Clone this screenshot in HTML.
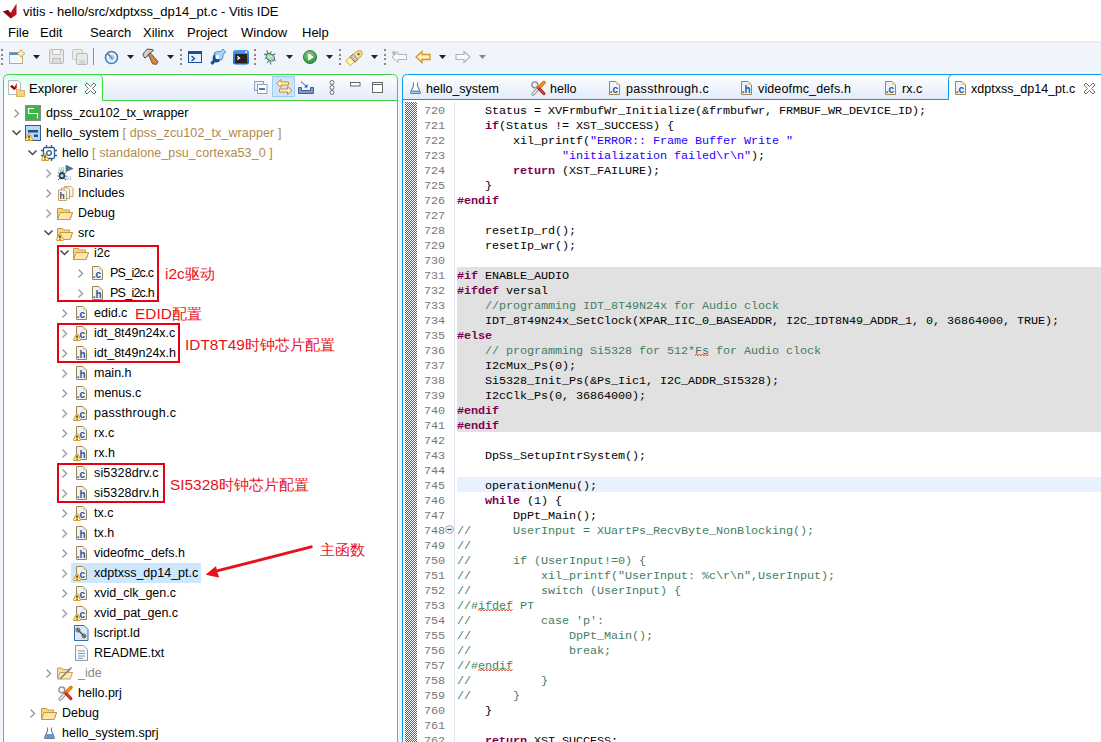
<!DOCTYPE html><html><head><meta charset="utf-8"><title>Vitis IDE</title><style>
*{margin:0;padding:0;box-sizing:border-box}
html,body{width:1101px;height:742px;overflow:hidden;background:#f0f5fc;font-family:"Liberation Sans",sans-serif;color:#000}
.abs{position:absolute}
.t{position:absolute;white-space:pre;line-height:14px}
svg{position:absolute;overflow:visible}
#title{position:absolute;left:0;top:0;width:1101px;height:41px;background:#fff}
#tbsep{position:absolute;left:0;top:41px;width:1101px;height:2px;background:#ececec}
.menu{position:absolute;top:25px;font-size:13px;white-space:pre}
.tree{position:absolute;font-size:12.5px;white-space:pre;line-height:20px;height:20px}
.code{position:absolute;left:457px;font-family:"Liberation Mono",monospace;font-size:11.8px;letter-spacing:-0.08px;white-space:pre;line-height:15px;height:15px}
.ln{position:absolute;left:417px;width:28px;text-align:right;font-family:"Liberation Mono",monospace;font-size:11.8px;letter-spacing:-0.08px;white-space:pre;line-height:15px;color:#787878}
.k{color:#7f0055;font-weight:bold}
.s{color:#2a00ff}
.c{color:#3f7f5f}
.ann{position:absolute;color:#e8101a;font-size:15.4px;white-space:pre;line-height:18px}
.rbox{position:absolute;border:2px solid #e60012}
.tab{position:absolute;top:81px;font-size:12.5px;white-space:pre;line-height:16px}
</style></head><body>
<div id="title"></div>
<svg style="left:2px;top:3px" width="16" height="16" viewBox="0 0 16 16"><path d="M1 8.5 L6 7 L8.5 10 L14.5 0.5 L14.5 11.5 L9 15.5 Z" fill="#c0101a"/><path d="M1 8.5 L6 7 L9 10.5 L9 15.5 Z" fill="#8a0a10"/></svg>
<div class="t" style="left:23px;top:5px;font-size:13px">vitis - hello/src/xdptxss_dp14_pt.c - Vitis IDE</div>
<div class="menu" style="left:8px">File</div>
<div class="menu" style="left:40px">Edit</div>
<div class="menu" style="left:90px">Search</div>
<div class="menu" style="left:143px">Xilinx</div>
<div class="menu" style="left:187px">Project</div>
<div class="menu" style="left:241px">Window</div>
<div class="menu" style="left:302px">Help</div>
<div id="tbsep"></div>
<svg style="left:1px;top:49px" width="2" height="16"><g fill="#8f887a"><rect x="0" y="0" width="2" height="2"/><rect x="0" y="5" width="2" height="2"/><rect x="0" y="9" width="2" height="2"/><rect x="0" y="14" width="2" height="2"/></g></svg>
<svg style="left:9px;top:49px" width="17" height="16"><rect x="0.5" y="3.5" width="13" height="11" fill="#f4f8fd" stroke="#c9a86a"/><rect x="0.5" y="3.5" width="13" height="2.5" fill="#4a90d9"/><path d="M12 0.5l1.5 2.5 2.5 1.5-2.5 1.5-1.5 2.5-1.5-2.5-2.5-1.5 2.5-1.5z" fill="#fff6c8" stroke="#c8a040" stroke-width="0.8"/></svg>
<svg style="left:33px;top:55px" width="8" height="5"><path d="M0 0H7L3.5 4Z" fill="#222"/></svg>
<svg style="left:49px;top:49px" width="16" height="16"><rect x="0.5" y="0.5" width="14" height="14" rx="1.5" fill="#e9e9e9" stroke="#b9b9b9"/><rect x="3.5" y="0.5" width="8" height="5" fill="#f7f7f7" stroke="#c0c0c0"/><rect x="3.5" y="9.5" width="8" height="5" fill="#dcdcdc" stroke="#bdbdbd"/></svg>
<svg style="left:72px;top:49px" width="16" height="16"><rect x="0.5" y="0.5" width="10" height="10" rx="1" fill="#ececec" stroke="#c4c4c4"/><rect x="4.5" y="4.5" width="11" height="11" rx="1.5" fill="#e9e9e9" stroke="#b9b9b9"/><rect x="7" y="11" width="6" height="4" fill="#d6d6d6"/></svg>
<div class="abs" style="left:93px;top:48px;width:1px;height:17px;background:#8c8c8c"></div>
<svg style="left:104px;top:50px" width="15" height="15"><circle cx="7.5" cy="7.5" r="6" fill="#e8f1fb" stroke="#3d7fc4" stroke-width="1.6"/><path d="M3.5 3.5L9 9" stroke="#5b6f85" stroke-width="1.5"/><circle cx="7.5" cy="7.5" r="2" fill="none" stroke="#8fb6e0"/></svg>
<svg style="left:127px;top:55px" width="8" height="5"><path d="M0 0H7L3.5 4Z" fill="#222"/></svg>
<svg style="left:138px;top:46px" width="24" height="22"><path d="M10.4 8.9L12.5 7.1L20 15.5L18.4 18.4L14.5 17.8Z" fill="#c98d48" stroke="#7a4614" stroke-width="0.9"/><path d="M9.2 3.1L14.8 3.6L15.7 4.5L14.2 5.5L11.9 6.8L8.6 11L6.8 11.9L5.3 9.8L5.2 7.4L7.4 5.3Z" fill="#cfcfcf" stroke="#3c3c3c" stroke-width="0.9"/></svg>
<svg style="left:167px;top:55px" width="8" height="5"><path d="M0 0H7L3.5 4Z" fill="#222"/></svg>
<svg style="left:180px;top:49px" width="2" height="16"><g fill="#8f887a"><rect x="0" y="0" width="2" height="2"/><rect x="0" y="5" width="2" height="2"/><rect x="0" y="9" width="2" height="2"/><rect x="0" y="14" width="2" height="2"/></g></svg>
<svg style="left:188px;top:51px" width="14" height="12"><rect x="0.5" y="0.5" width="13" height="11" fill="#e6f1f8" stroke="#1f4b9a"/><rect x="0.5" y="0.5" width="13" height="2.5" fill="#1f4b9a"/><path d="M3.5 5l3 2.5-3 2.5" fill="none" stroke="#1f4b9a" stroke-width="1.4"/></svg>
<svg style="left:206px;top:46px" width="24" height="22"><path d="M8 7Q11 5 14.5 5.5L17 3L19.8 6L17 8.5Q17.5 12 15.5 14Z" fill="#a9d3f3" stroke="#3a78b8" stroke-width="0.8"/><path d="M8 8L14.5 14.5Q12 17 9 16.3L6.5 19L4.2 16.8L6.8 14.2Q6 11 8 8Z" fill="#1a4f8f"/><circle cx="11.4" cy="11.1" r="2.1" fill="#fff"/></svg>
<svg style="left:233px;top:50px" width="16" height="15"><defs><linearGradient id="dtg" x1="0" y1="0" x2="0" y2="1"><stop offset="0" stop-color="#4a9af0"/><stop offset="1" stop-color="#1160d8"/></linearGradient></defs><rect x="0" y="0" width="16" height="14.6" rx="2.5" fill="url(#dtg)"/><rect x="2.2" y="4" width="11.8" height="9" fill="#2a2118"/><rect x="12.3" y="1.3" width="1.6" height="1.6" fill="#fff"/><path d="M4.3 6.3l2.2 1.6-2.2 1.6" fill="none" stroke="#fff" stroke-width="1.3"/></svg>
<svg style="left:254px;top:49px" width="2" height="16"><g fill="#8f887a"><rect x="0" y="0" width="2" height="2"/><rect x="0" y="5" width="2" height="2"/><rect x="0" y="9" width="2" height="2"/><rect x="0" y="14" width="2" height="2"/></g></svg>
<svg style="left:263px;top:49px" width="16" height="16"><g stroke="#2f4f3f" stroke-width="0.9" fill="none"><path d="M1 5.3H4.5M1.8 9.5L4.8 8.5M4.2 14.2L6 11.2M7 12.5L8 15.5M12.5 4.8L9.5 6M10 10.3L12.5 11.5M3.8 1.3L4.8 4.5M8.3 2.5L7.3 4.5"/></g><ellipse cx="7.3" cy="8.3" rx="3.2" ry="4.6" transform="rotate(-55 7.3 8.3)" fill="#b6d8a8" stroke="#2a6e7a" stroke-width="1"/><path d="M5 8.5L9.5 7" stroke="#e8f4e0" stroke-width="0.8"/></svg>
<svg style="left:286px;top:55px" width="8" height="5"><path d="M0 0H7L3.5 4Z" fill="#222"/></svg>
<svg style="left:303px;top:50px" width="15" height="15"><defs><radialGradient id="rung" cx="0.45" cy="0.35" r="0.7"><stop offset="0" stop-color="#8fd48a"/><stop offset="1" stop-color="#1f8a35"/></radialGradient></defs><circle cx="7" cy="7" r="6.6" fill="url(#rung)" stroke="#1d7a30" stroke-width="0.8"/><path d="M5.2 3.3L10.8 7 5.2 10.7Z" fill="#fff"/></svg>
<svg style="left:326px;top:55px" width="8" height="5"><path d="M0 0H7L3.5 4Z" fill="#222"/></svg>
<svg style="left:339px;top:49px" width="2" height="16"><g fill="#8f887a"><rect x="0" y="0" width="2" height="2"/><rect x="0" y="5" width="2" height="2"/><rect x="0" y="9" width="2" height="2"/><rect x="0" y="14" width="2" height="2"/></g></svg>
<svg style="left:342px;top:46px" width="24" height="22"><g transform="translate(7.5,16) rotate(-41)"><rect x="-2" y="-3.3" width="6" height="6.6" fill="#fff3b0" stroke="#e0a838" stroke-width="0.9"/><rect x="4" y="-3.6" width="4" height="7.2" fill="#c9c6d6" stroke="#8a6a40" stroke-width="0.9"/><path d="M8 -3.3L13.5 -3.3L16.5 0L13.5 3.3L8 3.3Z" fill="#f9dc86" stroke="#e39a2a" stroke-width="0.9"/><circle cx="12" cy="0" r="1.1" fill="#2352a0"/></g></svg>
<svg style="left:371px;top:55px" width="8" height="5"><path d="M0 0H7L3.5 4Z" fill="#222"/></svg>
<svg style="left:384px;top:49px" width="2" height="16"><g fill="#8f887a"><rect x="0" y="0" width="2" height="2"/><rect x="0" y="5" width="2" height="2"/><rect x="0" y="9" width="2" height="2"/><rect x="0" y="14" width="2" height="2"/></g></svg>
<svg style="left:391px;top:50px" width="17" height="14"><path d="M1 7L7 1.5V4.5H15.5V9.5H7V12.5Z" fill="#fafafa" stroke="#b5b5b5"/><path d="M3 0.5v5M0.8 3h4.5M1.3 1.3l3.4 3.4M4.7 1.3L1.3 4.7" stroke="#a9a9a9" stroke-width="0.8"/></svg>
<svg style="left:415px;top:50px" width="16" height="14"><path d="M1 7L7 1.5V4.5H15V9.5H7V12.5Z" fill="#fff0c2" stroke="#d9921a" stroke-width="1.3"/></svg>
<svg style="left:439px;top:55px" width="8" height="5"><path d="M0 0H7L3.5 4Z" fill="#222"/></svg>
<svg style="left:455px;top:50px" width="16" height="14"><path d="M15 7L9 1.5V4.5H1V9.5H9V12.5Z" fill="#fafafa" stroke="#b3b3b3" stroke-width="1.2"/></svg>
<svg style="left:479px;top:55px" width="8" height="5"><path d="M0 0H7L3.5 4Z" fill="#8a8a8a"/></svg>
<div class="abs" style="left:4px;top:75px;width:393px;height:700px;background:#fff;border-radius:5px 5px 0 0"></div>
<div class="abs" style="left:4px;top:75px;width:393px;height:25px;background:linear-gradient(#fdfeff,#e3ebfa);border-radius:5px 5px 0 0"></div>
<div class="abs" style="left:4px;top:75px;width:98px;height:25px;background:linear-gradient(#dcfdf2,#ffffff);border-radius:5px 5px 0 0"></div>
<svg style="left:0;top:0" width="1101" height="742"><path d="M3.5 760V79.5Q3.5 74.5 8.5 74.5H392.5Q397.5 74.5 397.5 79.5V760M97.5 74.5Q102.5 74.5 102.5 79.5V100.5H397" fill="none" stroke="#42d145"/></svg>
<svg style="left:4px;top:76px" width="26" height="22"><path d="M4.5 4.5H14L16.5 7V18.5H4.5Z" fill="#fff" stroke="#b4b8bc"/><path d="M6 10.3L8.3 9.2L10.5 11.3L12.7 6.8L12.8 12.2L10.3 14Z" fill="#c20c16"/><path d="M6 10.3L8.3 9.2L10.5 11.3L10.3 14Z" fill="#8c0a10"/><path d="M12.5 13.5H15.5L16.5 14.5H20.5V20.5H12.5Z" fill="#f4d183" stroke="#d9ab55" stroke-width="0.9"/></svg>
<div class="t" style="left:29px;top:82px;font-size:13px">Explorer</div>
<svg style="left:85px;top:83px" width="11" height="11"><path d="M1.5 0.5L5 4 8.5 0.5 10.5 2.5 7 6 10.5 9.5 8.5 11.5 5 8 1.5 11.5-0.5 9.5 3 6-0.5 2.5Z" transform="translate(0.5,-0.5)" fill="#fff" stroke="#707070" stroke-width="1"/></svg>
<svg style="left:254px;top:81px" width="14" height="13"><rect x="0.5" y="0.5" width="9" height="9" fill="#e8eef6" stroke="#8da2bb"/><rect x="3.5" y="3.5" width="9.5" height="9" fill="#fff" stroke="#8da2bb"/><path d="M5 8h6" stroke="#1f4f8f" stroke-width="1.5"/></svg>
<div class="abs" style="left:272px;top:76px;width:23px;height:21px;background:#cfe4fb;border:1px solid #9fcaf2"></div>
<svg style="left:276px;top:79px" width="17" height="17"><path d="M0.5 4.5L5 0.5V3H12.5V6H5V8.5Z" fill="#fff1c6" stroke="#d08a1c"/><path d="M16 11.5L11.5 7.5V10H3.5V13H11.5V15.5Z" fill="#fff1c6" stroke="#d08a1c"/></svg>
<svg style="left:298px;top:81px" width="16" height="13"><path d="M0.5 6.5V12.5H15.5V6.5H12.5V9.5H3.5V6.5Z" fill="#7d9ac4" stroke="#3e5f91"/><path d="M3 0.5L9 6" stroke="#2d5aa0"/><path d="M9.5 6.5L9.5 3 6 6.5Z" fill="#2d5aa0"/></svg>
<svg style="left:329px;top:80px" width="6" height="15"><g fill="#fff" stroke="#6a6a6a"><circle cx="3" cy="2.5" r="2"/><circle cx="3" cy="7.5" r="2"/><circle cx="3" cy="12.5" r="2"/></g></svg>
<svg style="left:350px;top:82px" width="11" height="5"><rect x="0.5" y="0.5" width="9.5" height="3.5" fill="#fff" stroke="#666"/></svg>
<svg style="left:372px;top:82px" width="11" height="11"><rect x="0.5" y="0.5" width="10" height="10" fill="#fff" stroke="#666"/><path d="M1 2.5h9" stroke="#666"/></svg>
<div class="abs" style="left:71px;top:563px;width:130px;height:20px;background:#cce8ff"></div>
<svg style="left:13px;top:108px" width="8" height="11"><path d="M1.5 1.5L5.5 5.5 1.5 9.5" fill="none" stroke="#9c9c9c" stroke-width="1.4"/></svg>
<svg style="left:25px;top:105px" width="16" height="16"><rect x="0.5" y="0.5" width="15" height="15" fill="#3cb54a" stroke="#8a8a8a"/><path d="M3.5 8.5V3.5H9M3.5 8.5H12.5V13.5" fill="none" stroke="#fff" stroke-width="1.2"/></svg>
<div class="tree" style="left:46px;top:103px;color:#000;">dpss_zcu102_tx_wrapper</div>
<svg style="left:11px;top:129px" width="11" height="8"><path d="M1.5 1.5L5.5 5.5 9.5 1.5" fill="none" stroke="#454545" stroke-width="1.5"/></svg>
<svg style="left:25px;top:125px" width="16" height="16"><rect x="0.5" y="0.5" width="15" height="15" fill="#bcd6f2" stroke="#2b5b9a"/><rect x="3" y="5" width="10" height="2.5" fill="#1d4f91"/><rect x="9" y="9.5" width="4" height="2.5" fill="#1d4f91"/></svg><svg style="left:25px;top:133px" width="8" height="8"><path d="M4 0.6Q4.4 0.6 4.7 1.2L7.6 6.6Q7.8 7.5 7 7.5H1Q0.2 7.5 0.4 6.6L3.3 1.2Q3.6 0.6 4 0.6Z" fill="#fde9a0" stroke="#d4921e" stroke-width="0.9"/><path d="M4 2.5v2.6M4 5.8v1" stroke="#000" stroke-width="1.1"/></svg>
<div class="tree" style="left:46px;top:123px;color:#000;">hello_system<span style="color:#b08a4c;letter-spacing:0.1px"> [ dpss_zcu102_tx_wrapper ]</span></div>
<svg style="left:27px;top:149px" width="11" height="8"><path d="M1.5 1.5L5.5 5.5 9.5 1.5" fill="none" stroke="#454545" stroke-width="1.5"/></svg>
<svg style="left:41px;top:145px" width="16" height="16"><rect x="2.5" y="2.5" width="11" height="11" rx="1.5" fill="#fff" stroke="#2d5a92" stroke-width="1.3"/><g stroke="#2d5a92" stroke-width="1.3"><path d="M5.5 0v2.5M10.5 0v2.5M5.5 13.5V16M10.5 13.5V16M0 5.5h2.5M0 10.5h2.5M13.5 5.5H16M13.5 10.5H16"/></g><circle cx="8" cy="8" r="2.3" fill="none" stroke="#2d5a92" stroke-width="1.3"/></svg><svg style="left:41px;top:153px" width="8" height="8"><path d="M4 0.6Q4.4 0.6 4.7 1.2L7.6 6.6Q7.8 7.5 7 7.5H1Q0.2 7.5 0.4 6.6L3.3 1.2Q3.6 0.6 4 0.6Z" fill="#fde9a0" stroke="#d4921e" stroke-width="0.9"/><path d="M4 2.5v2.6M4 5.8v1" stroke="#000" stroke-width="1.1"/></svg>
<div class="tree" style="left:62px;top:143px;color:#000;">hello<span style="color:#b08a4c;letter-spacing:0.1px"> [ standalone_psu_cortexa53_0 ]</span></div>
<svg style="left:45px;top:168px" width="8" height="11"><path d="M1.5 1.5L5.5 5.5 1.5 9.5" fill="none" stroke="#9c9c9c" stroke-width="1.4"/></svg>
<svg style="left:57px;top:165px" width="17" height="16"><text x="0.8" y="5.8" font-size="6.5" font-family="Liberation Serif" fill="#8c8c8c">10</text><text x="8.6" y="14.8" font-size="6.5" font-family="Liberation Serif" fill="#9a9a9a">01</text><path d="M9 0.3L16 3.5 9 6.7Z" fill="#4f7896" stroke="#36586f" stroke-width="0.6"/><g stroke="#1f3f6a" stroke-width="0.9"><path d="M1 7.5l2 1.5M0.5 11h2.3M1 15l2-2M9 7.5l-2 1.5M9.5 11H7.2M9 15l-2-2M3.5 5.8l1 1.5M6.5 5.8l-1 1.5"/></g><ellipse cx="5" cy="10.7" rx="3" ry="3.6" fill="#1f3f6a"/><circle cx="5" cy="10.7" r="1.6" fill="#b9e2b4"/></svg>
<div class="tree" style="left:78px;top:163px;color:#000;">Binaries</div>
<svg style="left:45px;top:188px" width="8" height="11"><path d="M1.5 1.5L5.5 5.5 1.5 9.5" fill="none" stroke="#9c9c9c" stroke-width="1.4"/></svg>
<svg style="left:57px;top:185px" width="17" height="17"><g fill="#f4f6fa" stroke="#c49a50" stroke-width="0.9"><path d="M7.5 1.5H14L16 3.5V11.5H7.5Z"/><path d="M4.5 3H11L12.5 4.5V13.5H4.5Z"/><path d="M1.5 5H8L9.5 6.5V15.5H1.5Z"/></g><text x="2.4" y="14.3" font-size="8.5" font-weight="bold" font-family="Liberation Sans" fill="#1f4a80">h</text></svg>
<div class="tree" style="left:78px;top:183px;color:#000;">Includes</div>
<svg style="left:45px;top:208px" width="8" height="11"><path d="M1.5 1.5L5.5 5.5 1.5 9.5" fill="none" stroke="#9c9c9c" stroke-width="1.4"/></svg>
<svg style="left:57px;top:207px" width="16" height="13"><path d="M0.5 2V12.5H13L15.5 5.5H3L0.5 12" fill="#fde6a8" stroke="#c79a3e"/><path d="M0.5 12V1.5H5.5L6.5 3H12.5V5.5" fill="#f6d58a" stroke="#c79a3e"/><path d="M0.5 12.5L3 5.5H15.5L13 12.5Z" fill="#fde7ae" stroke="#c79a3e"/></svg>
<div class="tree" style="left:78px;top:203px;color:#000;">Debug</div>
<svg style="left:43px;top:229px" width="11" height="8"><path d="M1.5 1.5L5.5 5.5 9.5 1.5" fill="none" stroke="#454545" stroke-width="1.5"/></svg>
<svg style="left:57px;top:227px" width="16" height="13"><path d="M0.5 2V12.5H13L15.5 5.5H3L0.5 12" fill="#fde6a8" stroke="#c79a3e"/><path d="M0.5 12V1.5H5.5L6.5 3H12.5V5.5" fill="#f6d58a" stroke="#c79a3e"/><path d="M0.5 12.5L3 5.5H15.5L13 12.5Z" fill="#fde7ae" stroke="#c79a3e"/></svg><svg style="left:56px;top:233px" width="8" height="8"><path d="M4 0.6Q4.4 0.6 4.7 1.2L7.6 6.6Q7.8 7.5 7 7.5H1Q0.2 7.5 0.4 6.6L3.3 1.2Q3.6 0.6 4 0.6Z" fill="#fde9a0" stroke="#d4921e" stroke-width="0.9"/><path d="M4 2.5v2.6M4 5.8v1" stroke="#000" stroke-width="1.1"/></svg>
<div class="tree" style="left:78px;top:223px;color:#000;">src</div>
<svg style="left:59px;top:249px" width="11" height="8"><path d="M1.5 1.5L5.5 5.5 9.5 1.5" fill="none" stroke="#454545" stroke-width="1.5"/></svg>
<svg style="left:73px;top:247px" width="16" height="13"><path d="M0.5 2V12.5H13L15.5 5.5H3L0.5 12" fill="#fde6a8" stroke="#c79a3e"/><path d="M0.5 12V1.5H5.5L6.5 3H12.5V5.5" fill="#f6d58a" stroke="#c79a3e"/><path d="M0.5 12.5L3 5.5H15.5L13 12.5Z" fill="#fde7ae" stroke="#c79a3e"/></svg>
<div class="tree" style="left:94px;top:243px;color:#000;">i2c</div>
<svg style="left:77px;top:268px" width="8" height="11"><path d="M1.5 1.5L5.5 5.5 1.5 9.5" fill="none" stroke="#9c9c9c" stroke-width="1.4"/></svg>
<svg style="left:92px;top:266px" width="11" height="14"><path d="M0.5 0.5H7L10.5 4V13.5H0.5Z" fill="#edf3fb" stroke="#a0844a"/><path d="M7 0.5V4H10.5Z" fill="#e4cf96"/><text x="0.8" y="11.5" font-family="Liberation Sans" font-weight="bold" font-size="10" fill="#24579a">.c</text></svg>
<div class="tree" style="left:110px;top:263px;color:#000;letter-spacing:-0.75px;">PS_i2c.c</div>
<svg style="left:77px;top:288px" width="8" height="11"><path d="M1.5 1.5L5.5 5.5 1.5 9.5" fill="none" stroke="#9c9c9c" stroke-width="1.4"/></svg>
<svg style="left:92px;top:286px" width="11" height="14"><path d="M0.5 0.5H7L10.5 4V13.5H0.5Z" fill="#edf3fb" stroke="#a0844a"/><path d="M7 0.5V4H10.5Z" fill="#e4cf96"/><text x="0.8" y="11.5" font-family="Liberation Sans" font-weight="bold" font-size="10" fill="#24579a">.h</text></svg>
<div class="tree" style="left:110px;top:283px;color:#000;letter-spacing:-0.75px;">PS_i2c.h</div>
<svg style="left:61px;top:308px" width="8" height="11"><path d="M1.5 1.5L5.5 5.5 1.5 9.5" fill="none" stroke="#9c9c9c" stroke-width="1.4"/></svg>
<svg style="left:76px;top:306px" width="11" height="14"><path d="M0.5 0.5H7L10.5 4V13.5H0.5Z" fill="#edf3fb" stroke="#a0844a"/><path d="M7 0.5V4H10.5Z" fill="#e4cf96"/><text x="0.8" y="11.5" font-family="Liberation Sans" font-weight="bold" font-size="10" fill="#24579a">.c</text></svg>
<div class="tree" style="left:94px;top:303px;color:#000;">edid.c</div>
<svg style="left:61px;top:328px" width="8" height="11"><path d="M1.5 1.5L5.5 5.5 1.5 9.5" fill="none" stroke="#9c9c9c" stroke-width="1.4"/></svg>
<svg style="left:76px;top:326px" width="11" height="14"><path d="M0.5 0.5H7L10.5 4V13.5H0.5Z" fill="#edf3fb" stroke="#a0844a"/><path d="M7 0.5V4H10.5Z" fill="#e4cf96"/><text x="0.8" y="11.5" font-family="Liberation Sans" font-weight="bold" font-size="10" fill="#24579a">.c</text></svg><svg style="left:73px;top:333px" width="8" height="8"><path d="M4 0.6Q4.4 0.6 4.7 1.2L7.6 6.6Q7.8 7.5 7 7.5H1Q0.2 7.5 0.4 6.6L3.3 1.2Q3.6 0.6 4 0.6Z" fill="#fde9a0" stroke="#d4921e" stroke-width="0.9"/><path d="M4 2.5v2.6M4 5.8v1" stroke="#000" stroke-width="1.1"/></svg>
<div class="tree" style="left:94px;top:323px;color:#000;">idt_8t49n24x.c</div>
<svg style="left:61px;top:348px" width="8" height="11"><path d="M1.5 1.5L5.5 5.5 1.5 9.5" fill="none" stroke="#9c9c9c" stroke-width="1.4"/></svg>
<svg style="left:76px;top:346px" width="11" height="14"><path d="M0.5 0.5H7L10.5 4V13.5H0.5Z" fill="#edf3fb" stroke="#a0844a"/><path d="M7 0.5V4H10.5Z" fill="#e4cf96"/><text x="0.8" y="11.5" font-family="Liberation Sans" font-weight="bold" font-size="10" fill="#24579a">.h</text></svg>
<div class="tree" style="left:94px;top:343px;color:#000;">idt_8t49n24x.h</div>
<svg style="left:61px;top:368px" width="8" height="11"><path d="M1.5 1.5L5.5 5.5 1.5 9.5" fill="none" stroke="#9c9c9c" stroke-width="1.4"/></svg>
<svg style="left:76px;top:366px" width="11" height="14"><path d="M0.5 0.5H7L10.5 4V13.5H0.5Z" fill="#edf3fb" stroke="#a0844a"/><path d="M7 0.5V4H10.5Z" fill="#e4cf96"/><text x="0.8" y="11.5" font-family="Liberation Sans" font-weight="bold" font-size="10" fill="#24579a">.h</text></svg>
<div class="tree" style="left:94px;top:363px;color:#000;">main.h</div>
<svg style="left:61px;top:388px" width="8" height="11"><path d="M1.5 1.5L5.5 5.5 1.5 9.5" fill="none" stroke="#9c9c9c" stroke-width="1.4"/></svg>
<svg style="left:76px;top:386px" width="11" height="14"><path d="M0.5 0.5H7L10.5 4V13.5H0.5Z" fill="#edf3fb" stroke="#a0844a"/><path d="M7 0.5V4H10.5Z" fill="#e4cf96"/><text x="0.8" y="11.5" font-family="Liberation Sans" font-weight="bold" font-size="10" fill="#24579a">.c</text></svg>
<div class="tree" style="left:94px;top:383px;color:#000;">menus.c</div>
<svg style="left:61px;top:408px" width="8" height="11"><path d="M1.5 1.5L5.5 5.5 1.5 9.5" fill="none" stroke="#9c9c9c" stroke-width="1.4"/></svg>
<svg style="left:76px;top:406px" width="11" height="14"><path d="M0.5 0.5H7L10.5 4V13.5H0.5Z" fill="#edf3fb" stroke="#a0844a"/><path d="M7 0.5V4H10.5Z" fill="#e4cf96"/><text x="0.8" y="11.5" font-family="Liberation Sans" font-weight="bold" font-size="10" fill="#24579a">.c</text></svg><svg style="left:73px;top:413px" width="8" height="8"><path d="M4 0.6Q4.4 0.6 4.7 1.2L7.6 6.6Q7.8 7.5 7 7.5H1Q0.2 7.5 0.4 6.6L3.3 1.2Q3.6 0.6 4 0.6Z" fill="#fde9a0" stroke="#d4921e" stroke-width="0.9"/><path d="M4 2.5v2.6M4 5.8v1" stroke="#000" stroke-width="1.1"/></svg>
<div class="tree" style="left:94px;top:403px;color:#000;letter-spacing:0.28px;">passthrough.c</div>
<svg style="left:61px;top:428px" width="8" height="11"><path d="M1.5 1.5L5.5 5.5 1.5 9.5" fill="none" stroke="#9c9c9c" stroke-width="1.4"/></svg>
<svg style="left:76px;top:426px" width="11" height="14"><path d="M0.5 0.5H7L10.5 4V13.5H0.5Z" fill="#edf3fb" stroke="#a0844a"/><path d="M7 0.5V4H10.5Z" fill="#e4cf96"/><text x="0.8" y="11.5" font-family="Liberation Sans" font-weight="bold" font-size="10" fill="#24579a">.c</text></svg><svg style="left:73px;top:433px" width="8" height="8"><path d="M4 0.6Q4.4 0.6 4.7 1.2L7.6 6.6Q7.8 7.5 7 7.5H1Q0.2 7.5 0.4 6.6L3.3 1.2Q3.6 0.6 4 0.6Z" fill="#fde9a0" stroke="#d4921e" stroke-width="0.9"/><path d="M4 2.5v2.6M4 5.8v1" stroke="#000" stroke-width="1.1"/></svg>
<div class="tree" style="left:94px;top:423px;color:#000;">rx.c</div>
<svg style="left:61px;top:448px" width="8" height="11"><path d="M1.5 1.5L5.5 5.5 1.5 9.5" fill="none" stroke="#9c9c9c" stroke-width="1.4"/></svg>
<svg style="left:76px;top:446px" width="11" height="14"><path d="M0.5 0.5H7L10.5 4V13.5H0.5Z" fill="#edf3fb" stroke="#a0844a"/><path d="M7 0.5V4H10.5Z" fill="#e4cf96"/><text x="0.8" y="11.5" font-family="Liberation Sans" font-weight="bold" font-size="10" fill="#24579a">.h</text></svg><svg style="left:73px;top:453px" width="8" height="8"><path d="M4 0.6Q4.4 0.6 4.7 1.2L7.6 6.6Q7.8 7.5 7 7.5H1Q0.2 7.5 0.4 6.6L3.3 1.2Q3.6 0.6 4 0.6Z" fill="#fde9a0" stroke="#d4921e" stroke-width="0.9"/><path d="M4 2.5v2.6M4 5.8v1" stroke="#000" stroke-width="1.1"/></svg>
<div class="tree" style="left:94px;top:443px;color:#000;">rx.h</div>
<svg style="left:61px;top:468px" width="8" height="11"><path d="M1.5 1.5L5.5 5.5 1.5 9.5" fill="none" stroke="#9c9c9c" stroke-width="1.4"/></svg>
<svg style="left:76px;top:466px" width="11" height="14"><path d="M0.5 0.5H7L10.5 4V13.5H0.5Z" fill="#edf3fb" stroke="#a0844a"/><path d="M7 0.5V4H10.5Z" fill="#e4cf96"/><text x="0.8" y="11.5" font-family="Liberation Sans" font-weight="bold" font-size="10" fill="#24579a">.c</text></svg>
<div class="tree" style="left:94px;top:463px;color:#000;letter-spacing:0.15px;">si5328drv.c</div>
<svg style="left:61px;top:488px" width="8" height="11"><path d="M1.5 1.5L5.5 5.5 1.5 9.5" fill="none" stroke="#9c9c9c" stroke-width="1.4"/></svg>
<svg style="left:76px;top:486px" width="11" height="14"><path d="M0.5 0.5H7L10.5 4V13.5H0.5Z" fill="#edf3fb" stroke="#a0844a"/><path d="M7 0.5V4H10.5Z" fill="#e4cf96"/><text x="0.8" y="11.5" font-family="Liberation Sans" font-weight="bold" font-size="10" fill="#24579a">.h</text></svg>
<div class="tree" style="left:94px;top:483px;color:#000;letter-spacing:0.12px;">si5328drv.h</div>
<svg style="left:61px;top:508px" width="8" height="11"><path d="M1.5 1.5L5.5 5.5 1.5 9.5" fill="none" stroke="#9c9c9c" stroke-width="1.4"/></svg>
<svg style="left:76px;top:506px" width="11" height="14"><path d="M0.5 0.5H7L10.5 4V13.5H0.5Z" fill="#edf3fb" stroke="#a0844a"/><path d="M7 0.5V4H10.5Z" fill="#e4cf96"/><text x="0.8" y="11.5" font-family="Liberation Sans" font-weight="bold" font-size="10" fill="#24579a">.c</text></svg><svg style="left:73px;top:513px" width="8" height="8"><path d="M4 0.6Q4.4 0.6 4.7 1.2L7.6 6.6Q7.8 7.5 7 7.5H1Q0.2 7.5 0.4 6.6L3.3 1.2Q3.6 0.6 4 0.6Z" fill="#fde9a0" stroke="#d4921e" stroke-width="0.9"/><path d="M4 2.5v2.6M4 5.8v1" stroke="#000" stroke-width="1.1"/></svg>
<div class="tree" style="left:94px;top:503px;color:#000;">tx.c</div>
<svg style="left:61px;top:528px" width="8" height="11"><path d="M1.5 1.5L5.5 5.5 1.5 9.5" fill="none" stroke="#9c9c9c" stroke-width="1.4"/></svg>
<svg style="left:76px;top:526px" width="11" height="14"><path d="M0.5 0.5H7L10.5 4V13.5H0.5Z" fill="#edf3fb" stroke="#a0844a"/><path d="M7 0.5V4H10.5Z" fill="#e4cf96"/><text x="0.8" y="11.5" font-family="Liberation Sans" font-weight="bold" font-size="10" fill="#24579a">.h</text></svg>
<div class="tree" style="left:94px;top:523px;color:#000;">tx.h</div>
<svg style="left:61px;top:548px" width="8" height="11"><path d="M1.5 1.5L5.5 5.5 1.5 9.5" fill="none" stroke="#9c9c9c" stroke-width="1.4"/></svg>
<svg style="left:76px;top:546px" width="11" height="14"><path d="M0.5 0.5H7L10.5 4V13.5H0.5Z" fill="#edf3fb" stroke="#a0844a"/><path d="M7 0.5V4H10.5Z" fill="#e4cf96"/><text x="0.8" y="11.5" font-family="Liberation Sans" font-weight="bold" font-size="10" fill="#24579a">.h</text></svg>
<div class="tree" style="left:94px;top:543px;color:#000;">videofmc_defs.h</div>
<svg style="left:61px;top:568px" width="8" height="11"><path d="M1.5 1.5L5.5 5.5 1.5 9.5" fill="none" stroke="#9c9c9c" stroke-width="1.4"/></svg>
<svg style="left:76px;top:566px" width="11" height="14"><path d="M0.5 0.5H7L10.5 4V13.5H0.5Z" fill="#edf3fb" stroke="#a0844a"/><path d="M7 0.5V4H10.5Z" fill="#e4cf96"/><text x="0.8" y="11.5" font-family="Liberation Sans" font-weight="bold" font-size="10" fill="#24579a">.c</text></svg><svg style="left:73px;top:573px" width="8" height="8"><path d="M4 0.6Q4.4 0.6 4.7 1.2L7.6 6.6Q7.8 7.5 7 7.5H1Q0.2 7.5 0.4 6.6L3.3 1.2Q3.6 0.6 4 0.6Z" fill="#fde9a0" stroke="#d4921e" stroke-width="0.9"/><path d="M4 2.5v2.6M4 5.8v1" stroke="#000" stroke-width="1.1"/></svg>
<div class="tree" style="left:94px;top:563px;color:#000;">xdptxss_dp14_pt.c</div>
<svg style="left:61px;top:588px" width="8" height="11"><path d="M1.5 1.5L5.5 5.5 1.5 9.5" fill="none" stroke="#9c9c9c" stroke-width="1.4"/></svg>
<svg style="left:76px;top:586px" width="11" height="14"><path d="M0.5 0.5H7L10.5 4V13.5H0.5Z" fill="#edf3fb" stroke="#a0844a"/><path d="M7 0.5V4H10.5Z" fill="#e4cf96"/><text x="0.8" y="11.5" font-family="Liberation Sans" font-weight="bold" font-size="10" fill="#24579a">.c</text></svg><svg style="left:73px;top:593px" width="8" height="8"><path d="M4 0.6Q4.4 0.6 4.7 1.2L7.6 6.6Q7.8 7.5 7 7.5H1Q0.2 7.5 0.4 6.6L3.3 1.2Q3.6 0.6 4 0.6Z" fill="#fde9a0" stroke="#d4921e" stroke-width="0.9"/><path d="M4 2.5v2.6M4 5.8v1" stroke="#000" stroke-width="1.1"/></svg>
<div class="tree" style="left:94px;top:583px;color:#000;">xvid_clk_gen.c</div>
<svg style="left:61px;top:608px" width="8" height="11"><path d="M1.5 1.5L5.5 5.5 1.5 9.5" fill="none" stroke="#9c9c9c" stroke-width="1.4"/></svg>
<svg style="left:76px;top:606px" width="11" height="14"><path d="M0.5 0.5H7L10.5 4V13.5H0.5Z" fill="#edf3fb" stroke="#a0844a"/><path d="M7 0.5V4H10.5Z" fill="#e4cf96"/><text x="0.8" y="11.5" font-family="Liberation Sans" font-weight="bold" font-size="10" fill="#24579a">.c</text></svg><svg style="left:73px;top:613px" width="8" height="8"><path d="M4 0.6Q4.4 0.6 4.7 1.2L7.6 6.6Q7.8 7.5 7 7.5H1Q0.2 7.5 0.4 6.6L3.3 1.2Q3.6 0.6 4 0.6Z" fill="#fde9a0" stroke="#d4921e" stroke-width="0.9"/><path d="M4 2.5v2.6M4 5.8v1" stroke="#000" stroke-width="1.1"/></svg>
<div class="tree" style="left:94px;top:603px;color:#000;">xvid_pat_gen.c</div>
<svg style="left:74px;top:625px" width="15" height="16"><path d="M0.5 0.5H10L14 4.5V15.5H0.5Z" fill="#dbe8f6" stroke="#3b6aa6"/><path d="M3 4L11 12" stroke="#555" stroke-width="1.6"/><circle cx="4" cy="5" r="2" fill="none" stroke="#555"/><circle cx="10" cy="11" r="2" fill="none" stroke="#555"/></svg>
<div class="tree" style="left:94px;top:623px;color:#000;">lscript.ld</div>
<svg style="left:75px;top:645px" width="13" height="16"><path d="M0.5 0.5H8.5L12.5 4.5V15.5H0.5Z" fill="#f6f8fb" stroke="#8b98a8"/><path d="M3 6h7M3 8.5h7M3 11h7M3 13.3h5" stroke="#8b98a8"/></svg>
<div class="tree" style="left:94px;top:643px;color:#000;">README.txt</div>
<svg style="left:45px;top:668px" width="8" height="11"><path d="M1.5 1.5L5.5 5.5 1.5 9.5" fill="none" stroke="#9c9c9c" stroke-width="1.4"/></svg>
<svg style="left:57px;top:666px" width="17" height="14"><path d="M0.5 13V2H5L6 3.5H12V6" fill="#f5dfa6" stroke="#c4a161"/><path d="M0.5 13L3 6.5H15.5L13 13Z" fill="#fbe9bc" stroke="#c4a161"/><path d="M3 13L14.5 1.5" stroke="#7d7d7d" stroke-width="1.5"/></svg>
<div class="tree" style="left:78px;top:663px;color:#888;">_ide</div>
<svg style="left:57px;top:685px" width="16" height="16"><path d="M8.5 8.5L3 14" stroke="#8a8a8a" stroke-width="3.2" stroke-linecap="round"/><path d="M8.5 8.5L3 14" stroke="#f4f4f4" stroke-width="1.6" stroke-linecap="round"/><circle cx="4.8" cy="4.8" r="3" fill="#f0f0f0" stroke="#8a8a8a" stroke-width="1.3"/><path d="M3.5 3.5l1.5 1.5" stroke="#fff" stroke-width="1.5"/><path d="M14 2.5L8.5 8" stroke="#d45a00" stroke-width="3.4" stroke-linecap="round"/><path d="M14 2.5L8.5 8" stroke="#ffa020" stroke-width="1.6" stroke-linecap="round"/><path d="M9.5 9L13.8 13.5" stroke="#b01a1a" stroke-width="3.2" stroke-linecap="round"/><path d="M9.5 9L13.8 13.5" stroke="#e04040" stroke-width="1.3" stroke-linecap="round"/></svg>
<div class="tree" style="left:78px;top:683px;color:#000;">hello.prj</div>
<svg style="left:29px;top:708px" width="8" height="11"><path d="M1.5 1.5L5.5 5.5 1.5 9.5" fill="none" stroke="#9c9c9c" stroke-width="1.4"/></svg>
<svg style="left:41px;top:707px" width="16" height="13"><path d="M0.5 2V12.5H13L15.5 5.5H3L0.5 12" fill="#fde6a8" stroke="#c79a3e"/><path d="M0.5 12V1.5H5.5L6.5 3H12.5V5.5" fill="#f6d58a" stroke="#c79a3e"/><path d="M0.5 12.5L3 5.5H15.5L13 12.5Z" fill="#fde7ae" stroke="#c79a3e"/></svg>
<div class="tree" style="left:62px;top:703px;color:#000;">Debug</div>
<svg style="left:44px;top:727px" width="11" height="12"><path d="M3.5 0.5V4L0.7 10.3Q0.4 11.5 1.6 11.5H9.4Q10.6 11.5 10.3 10.3L7.5 4V0.5" fill="#fff" stroke="#727b86" stroke-width="1.1"/><path d="M2.2 7H8.8L10 10.5Q10 11 9.4 11H1.6Q1 11 1 10.5Z" fill="#5a9ad6"/></svg>
<div class="tree" style="left:62px;top:723px;color:#000;">hello_system.sprj</div>
<div class="rbox" style="left:57px;top:245px;width:102px;height:57px"></div>
<div class="rbox" style="left:57px;top:323px;width:123px;height:40px"></div>
<div class="rbox" style="left:57px;top:463px;width:108px;height:40px"></div>
<div class="ann" style="left:165px;top:265px">i2c驱动</div>
<div class="ann" style="left:135px;top:305px">EDID配置</div>
<div class="ann" style="left:185px;top:336px">IDT8T49时钟芯片配置</div>
<div class="ann" style="left:170px;top:476px">SI5328时钟芯片配置</div>
<div class="ann" style="left:320px;top:541px">主函数</div>
<svg style="left:0;top:0" width="1101" height="742"><path d="M311.2 546.9L214 571.6" stroke="#e8101a" stroke-width="3" stroke-linecap="round"/><path d="M206.5 574.4L215.8 566.8L216.5 571.4L218.6 577Z" fill="#e8101a" stroke="#e8101a" stroke-width="1" stroke-linejoin="round"/></svg>
<div class="abs" style="left:403px;top:75px;width:700px;height:700px;background:#fff;border-radius:5px 0 0 0"></div>
<div class="abs" style="left:403px;top:75px;width:546px;height:24px;background:linear-gradient(#fdfeff,#e3ebfa);border-radius:5px 5px 0 0"></div>
<svg style="left:0;top:0" width="1101" height="742"><path d="M402.5 760V79.5Q402.5 74.5 407.5 74.5H1101M402 99.5H948.5V79.5Q948.5 74.5 953.5 74.5" fill="none" stroke="#0b98e4"/></svg>
<svg style="left:410px;top:82px" width="11" height="12"><path d="M3.5 0.5V4L0.7 10.3Q0.4 11.5 1.6 11.5H9.4Q10.6 11.5 10.3 10.3L7.5 4V0.5" fill="#fff" stroke="#727b86" stroke-width="1.1"/><path d="M2 8.5H9L9.8 10.5H1.2Z" fill="#5a95cf"/></svg>
<div class="tab" style="left:426px">hello_system</div>
<svg style="left:530px;top:80px" width="16" height="16"><path d="M8.5 8.5L3 14" stroke="#8a8a8a" stroke-width="3.2" stroke-linecap="round"/><path d="M8.5 8.5L3 14" stroke="#f4f4f4" stroke-width="1.6" stroke-linecap="round"/><circle cx="4.8" cy="4.8" r="3" fill="#f0f0f0" stroke="#8a8a8a" stroke-width="1.3"/><path d="M3.5 3.5l1.5 1.5" stroke="#fff" stroke-width="1.5"/><path d="M14 2.5L8.5 8" stroke="#d45a00" stroke-width="3.4" stroke-linecap="round"/><path d="M14 2.5L8.5 8" stroke="#ffa020" stroke-width="1.6" stroke-linecap="round"/><path d="M9.5 9L13.8 13.5" stroke="#b01a1a" stroke-width="3.2" stroke-linecap="round"/><path d="M9.5 9L13.8 13.5" stroke="#e04040" stroke-width="1.3" stroke-linecap="round"/></svg>
<div class="tab" style="left:550px">hello</div>
<svg style="left:609px;top:81px" width="11" height="14"><path d="M0.5 0.5H7L10.5 4V13.5H0.5Z" fill="#edf3fb" stroke="#a0844a"/><path d="M7 0.5V4H10.5Z" fill="#e4cf96"/><text x="0.8" y="11.5" font-family="Liberation Sans" font-weight="bold" font-size="10" fill="#24579a">.c</text></svg>
<div class="tab" style="left:626px;letter-spacing:0.35px">passthrough.c</div>
<svg style="left:741px;top:81px" width="11" height="14"><path d="M0.5 0.5H7L10.5 4V13.5H0.5Z" fill="#edf3fb" stroke="#a0844a"/><path d="M7 0.5V4H10.5Z" fill="#e4cf96"/><text x="0.8" y="11.5" font-family="Liberation Sans" font-weight="bold" font-size="10" fill="#24579a">.h</text></svg>
<div class="tab" style="left:758px;letter-spacing:0.13px">videofmc_defs.h</div>
<svg style="left:885px;top:81px" width="11" height="14"><path d="M0.5 0.5H7L10.5 4V13.5H0.5Z" fill="#edf3fb" stroke="#a0844a"/><path d="M7 0.5V4H10.5Z" fill="#e4cf96"/><text x="0.8" y="11.5" font-family="Liberation Sans" font-weight="bold" font-size="10" fill="#24579a">.c</text></svg>
<div class="tab" style="left:902px">rx.c</div>
<svg style="left:955px;top:81px" width="11" height="14"><path d="M0.5 0.5H7L10.5 4V13.5H0.5Z" fill="#edf3fb" stroke="#a0844a"/><path d="M7 0.5V4H10.5Z" fill="#e4cf96"/><text x="0.8" y="11.5" font-family="Liberation Sans" font-weight="bold" font-size="10" fill="#24579a">.c</text></svg>
<div class="tab" style="left:971px">xdptxss_dp14_pt.c</div>
<svg style="left:1084px;top:83px" width="11" height="11"><path d="M1.5 0.5L5 4 8.5 0.5 10.5 2.5 7 6 10.5 9.5 8.5 11.5 5 8 1.5 11.5-0.5 9.5 3 6-0.5 2.5Z" transform="translate(0.5,-0.5)" fill="#fff" stroke="#707070" stroke-width="1"/></svg>
<svg style="left:405px;top:102px" width="12" height="640"><defs><pattern id="chk" width="2" height="2" patternUnits="userSpaceOnUse"><rect width="1" height="1" fill="#0b74d8"/><rect x="1" y="1" width="1" height="1" fill="#0b74d8"/></pattern></defs><rect width="12" height="640" fill="#fff"/><rect width="12" height="640" fill="url(#chk)" shape-rendering="crispEdges"/></svg>
<div class="abs" style="left:454px;top:102px;width:1px;height:640px;background:#dde6f2"></div>
<div class="abs" style="left:457px;top:267px;width:644px;height:165px;background:#e1e1e1"></div>
<div class="abs" style="left:457px;top:477px;width:644px;height:15px;background:#e8f2fe"></div>
<div class="ln" style="top:104px">720</div>
<div class="code" style="top:104px">    Status = XVFrmbufWr_Initialize(&amp;frmbufwr, FRMBUF_WR_DEVICE_ID);</div>
<div class="ln" style="top:119px">721</div>
<div class="code" style="top:119px">    <span class="k">if</span>(Status != XST_SUCCESS) {</div>
<div class="ln" style="top:134px">722</div>
<div class="code" style="top:134px">        xil_printf(<span class="s">&quot;ERROR:: Frame Buffer Write &quot;</span></div>
<div class="ln" style="top:149px">723</div>
<div class="code" style="top:149px">               <span class="s">&quot;initialization failed\r\n&quot;</span>);</div>
<div class="ln" style="top:164px">724</div>
<div class="code" style="top:164px">        <span class="k">return</span> (XST_FAILURE);</div>
<div class="ln" style="top:179px">725</div>
<div class="code" style="top:179px">    }</div>
<div class="ln" style="top:194px">726</div>
<div class="code" style="top:194px"><span class="k">#endif</span></div>
<div class="ln" style="top:209px">727</div>
<div class="code" style="top:209px"></div>
<div class="ln" style="top:224px">728</div>
<div class="code" style="top:224px">    resetIp_rd();</div>
<div class="ln" style="top:239px">729</div>
<div class="code" style="top:239px">    resetIp_wr();</div>
<div class="ln" style="top:254px">730</div>
<div class="code" style="top:254px"></div>
<div class="ln" style="top:269px">731</div>
<div class="code" style="top:269px"><span class="k">#if</span> ENABLE_AUDIO</div>
<div class="ln" style="top:284px">732</div>
<div class="code" style="top:284px"><span class="k">#ifdef</span> versal</div>
<div class="ln" style="top:299px">733</div>
<div class="code" style="top:299px"><span class="c">    //programming IDT_8T49N24x for Audio clock</span></div>
<div class="ln" style="top:314px">734</div>
<div class="code" style="top:314px">    IDT_8T49N24x_SetClock(XPAR_IIC_0_BASEADDR, I2C_IDT8N49_ADDR_1, 0, 36864000, TRUE);</div>
<div class="ln" style="top:329px">735</div>
<div class="code" style="top:329px"><span class="k">#else</span></div>
<div class="ln" style="top:344px">736</div>
<div class="code" style="top:344px"><span class="c">    // programming Si5328 for 512*Fs for Audio clock</span></div>
<div class="ln" style="top:359px">737</div>
<div class="code" style="top:359px">    I2cMux_Ps(0);</div>
<div class="ln" style="top:374px">738</div>
<div class="code" style="top:374px">    Si5328_Init_Ps(&amp;Ps_Iic1, I2C_ADDR_SI5328);</div>
<div class="ln" style="top:389px">739</div>
<div class="code" style="top:389px">    I2cClk_Ps(0, 36864000);</div>
<div class="ln" style="top:404px">740</div>
<div class="code" style="top:404px"><span class="k">#endif</span></div>
<div class="ln" style="top:419px">741</div>
<div class="code" style="top:419px"><span class="k">#endif</span></div>
<div class="ln" style="top:434px">742</div>
<div class="code" style="top:434px"></div>
<div class="ln" style="top:449px">743</div>
<div class="code" style="top:449px">    DpSs_SetupIntrSystem();</div>
<div class="ln" style="top:464px">744</div>
<div class="code" style="top:464px"></div>
<div class="ln" style="top:479px">745</div>
<div class="code" style="top:479px">    operationMenu();</div>
<div class="ln" style="top:494px">746</div>
<div class="code" style="top:494px">    <span class="k">while</span> (1) {</div>
<div class="ln" style="top:509px">747</div>
<div class="code" style="top:509px">        DpPt_Main();</div>
<div class="ln" style="top:524px">748</div>
<div class="code" style="top:524px"><span class="c">//      UserInput = XUartPs_RecvByte_NonBlocking();</span></div>
<div class="ln" style="top:539px">749</div>
<div class="code" style="top:539px"><span class="c">//</span></div>
<div class="ln" style="top:554px">750</div>
<div class="code" style="top:554px"><span class="c">//      if (UserInput!=0) {</span></div>
<div class="ln" style="top:569px">751</div>
<div class="code" style="top:569px"><span class="c">//          xil_printf(&quot;UserInput: %c\r\n&quot;,UserInput);</span></div>
<div class="ln" style="top:584px">752</div>
<div class="code" style="top:584px"><span class="c">//          switch (UserInput) {</span></div>
<div class="ln" style="top:599px">753</div>
<div class="code" style="top:599px"><span class="c">//#ifdef PT</span></div>
<div class="ln" style="top:614px">754</div>
<div class="code" style="top:614px"><span class="c">//          case &#x27;p&#x27;:</span></div>
<div class="ln" style="top:629px">755</div>
<div class="code" style="top:629px"><span class="c">//              DpPt_Main();</span></div>
<div class="ln" style="top:644px">756</div>
<div class="code" style="top:644px"><span class="c">//              break;</span></div>
<div class="ln" style="top:659px">757</div>
<div class="code" style="top:659px"><span class="c">//#endif</span></div>
<div class="ln" style="top:674px">758</div>
<div class="code" style="top:674px"><span class="c">//          }</span></div>
<div class="ln" style="top:689px">759</div>
<div class="code" style="top:689px"><span class="c">//      }</span></div>
<div class="ln" style="top:704px">760</div>
<div class="code" style="top:704px">    }</div>
<div class="ln" style="top:719px">761</div>
<div class="code" style="top:719px"></div>
<div class="ln" style="top:734px">762</div>
<div class="code" style="top:734px">    <span class="k">return</span> XST_SUCCESS;</div>
<svg style="left:445px;top:525px" width="9" height="9"><circle cx="4.5" cy="4.5" r="4" fill="#eef2f8" stroke="#a3afbf"/><path d="M2.3 4.5h4.4" stroke="#3a4660" stroke-width="1.2"/></svg>
<svg style="left:0;top:0" width="1101" height="742"><path d="M695 356 l1.5 -2 l1.5 2 l1.5 -2 l1.5 2 l1.5 -2 l1.5 2 l1.5 -2 l1.5 2 l1.5 -2" fill="none" stroke="#ea4a2a" stroke-width="0.9"/></svg>
<svg style="left:0;top:0" width="1101" height="742"><path d="M478 611 l1.5 -2 l1.5 2 l1.5 -2 l1.5 2 l1.5 -2 l1.5 2 l1.5 -2 l1.5 2 l1.5 -2 l1.5 2 l1.5 -2 l1.5 2 l1.5 -2 l1.5 2 l1.5 -2 l1.5 2 l1.5 -2 l1.5 2 l1.5 -2 l1.5 2 l1.5 -2 l1.5 2 l1.5 -2" fill="none" stroke="#ea4a2a" stroke-width="0.9"/></svg>
<svg style="left:0;top:0" width="1101" height="742"><path d="M478 671 l1.5 -2 l1.5 2 l1.5 -2 l1.5 2 l1.5 -2 l1.5 2 l1.5 -2 l1.5 2 l1.5 -2 l1.5 2 l1.5 -2 l1.5 2 l1.5 -2 l1.5 2 l1.5 -2 l1.5 2 l1.5 -2 l1.5 2 l1.5 -2 l1.5 2 l1.5 -2 l1.5 2 l1.5 -2" fill="none" stroke="#ea4a2a" stroke-width="0.9"/></svg>
</body></html>
